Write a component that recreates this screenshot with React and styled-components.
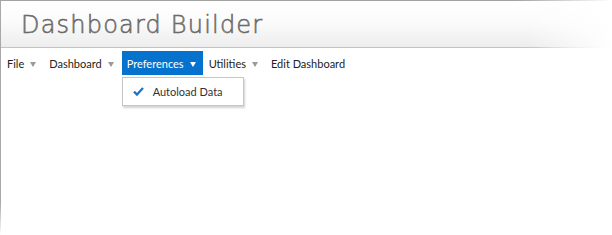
import React from 'react';
import styled, { createGlobalStyle } from 'styled-components';

const GlobalStyle = createGlobalStyle`
  html, body, #root {
    margin: 0;
    height: 100%;
  }
  body {
    background: #fff;
    font-family: 'Lato', 'Noto Sans', sans-serif;
  }
`;

const menus = [
  { label: 'File', caret: true },
  { label: 'Dashboard', caret: true },
  { label: 'Preferences', caret: true, open: true },
  { label: 'Utilities', caret: true },
  { label: 'Edit Dashboard', caret: false },
];

const App = () => {
  return (
    <>
      <GlobalStyle />
      <StFrame>
        <StHeader>
          <StTitle>Dashboard Builder</StTitle>
        </StHeader>
        <StMenuBar>
          {menus.map(menu => (
            <StMenuItem key={menu.label} $active={menu.open}>
              {menu.label}
              {menu.caret && <StCaret $active={menu.open} />}
              {menu.open && (
                <StDropdown>
                  <StOption>
                    <svg width="11" height="9" viewBox="0 0 11 9">
                      <path
                        d="M1 4.6 L4 7.6 L10 1"
                        fill="none"
                        stroke="#1a73c9"
                        strokeWidth="2.2"
                      />
                    </svg>
                    <span>Autoload Data</span>
                  </StOption>
                </StDropdown>
              )}
            </StMenuItem>
          ))}
        </StMenuBar>
      </StFrame>
    </>
  );
};

export default App;

const StFrame = styled.div`
  height: 100%;
  box-sizing: border-box;
  padding: 1px 0 0 1px;
  background:
    linear-gradient(to right, #a2a2a2 0, #a2a2a2 84%, rgba(160, 160, 160, 0) 100%) top left / 100% 1px no-repeat,
    linear-gradient(to bottom, #a8a8a8 0, #a8a8a8 86%, rgba(168, 168, 168, 0) 100%) top left / 1px 100% no-repeat,
    #fff;
`;

const StHeader = styled.div`
  height: 47px;
  display: flex;
  align-items: center;
  padding-left: 20px;
  background:
    linear-gradient(to right, rgba(255, 255, 255, 0) 86%, #fff 100%),
    linear-gradient(to right, #c4c4c4 0, #c4c4c4 88%, rgba(196, 196, 196, 0) 100%) bottom left / 100% 1px no-repeat,
    linear-gradient(to bottom, #fff 0, #fbfbfb 45%, #ececec 100%);
`;

const StTitle = styled.div`
  font-family: 'DejaVu Sans', sans-serif;
  font-weight: 200;
  font-size: 24px;
  letter-spacing: 1.2px;
  color: #858585;
  -webkit-text-stroke: 0.5px #555;
  margin-top: 1px;
`;

const StMenuBar = styled.div`
  display: flex;
  gap: 1px;
  padding: 3px 0 0 1px;
  height: 24px;
`;

const StMenuItem = styled.div`
  position: relative;
  display: flex;
  align-items: center;
  padding: 0 7px 0 5px;
  font-size: 11px;
  color: ${p => (p.$active ? '#fff' : '#222')};
  background: ${p => (p.$active ? '#0572ce' : 'transparent')};
  white-space: nowrap;
`;

const StCaret = styled.span`
  margin-left: 6px;
  width: 0;
  height: 0;
  border-left: 3.5px solid transparent;
  border-right: 3.5px solid transparent;
  border-top: 5px solid ${p => (p.$active ? '#fff' : '#9a9a9a')};
  margin-top: 2px;
`;

const StDropdown = styled.div`
  position: absolute;
  top: 26px;
  left: 0;
  width: 120px;
  height: 27px;
  background: #fff;
  border: 1px solid #c6c6c6;
  box-shadow: 1px 2px 2px rgba(0, 0, 0, 0.18);
  display: flex;
  align-items: center;
`;

const StOption = styled.div`
  display: flex;
  align-items: center;
  gap: 9px;
  padding-left: 10px;
  font-size: 11px;
  color: #333;
`;
